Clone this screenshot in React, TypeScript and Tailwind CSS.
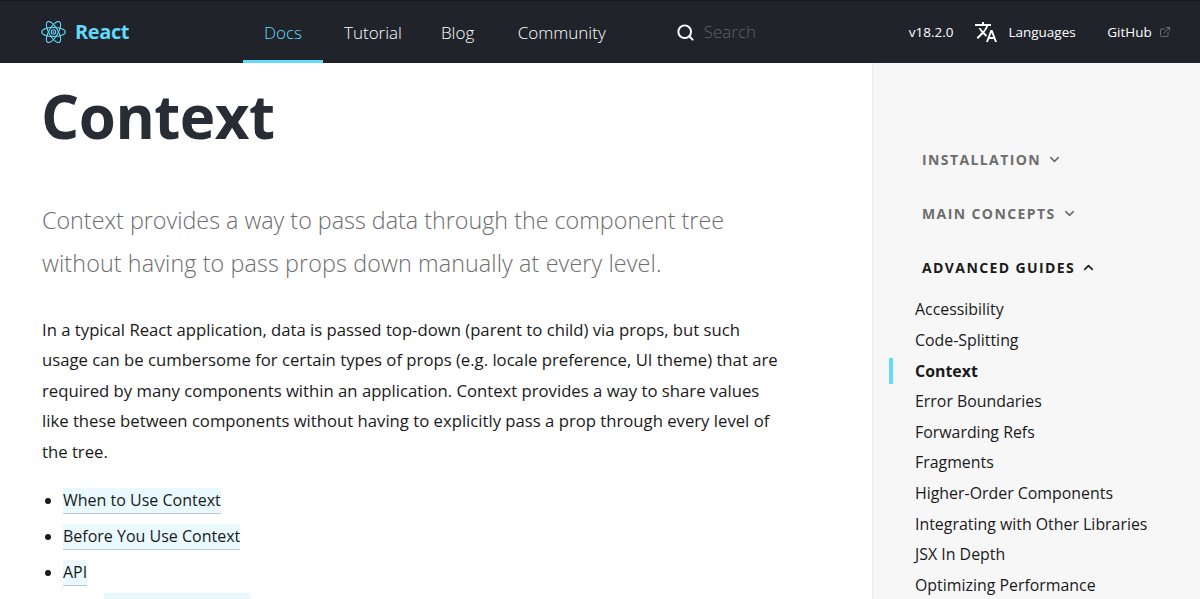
import React from 'react';
import { Search, ExternalLink, ChevronDown, ChevronUp } from 'lucide-react';

const FONT = "font-['Open_Sans','Noto_Sans',sans-serif]";

const NAV = ['Tutorial', 'Blog', 'Community'];

const GUIDES = [
  'Accessibility',
  'Code-Splitting',
  'Context',
  'Error Boundaries',
  'Forwarding Refs',
  'Fragments',
  'Higher-Order Components',
  'Integrating with Other Libraries',
  'JSX In Depth',
  'Optimizing Performance',
];

const ReactLogo = () => (
  <svg viewBox="-11.5 -10.2 23 20.4" className="w-[25px] h-[22px] text-[#61dafb]" fill="none" stroke="currentColor" strokeWidth="1">
    <circle r="2.05" fill="none" />
    <circle r="0.8" fill="currentColor" stroke="none" />
    <ellipse rx="11" ry="4.2" />
    <ellipse rx="11" ry="4.2" transform="rotate(60)" />
    <ellipse rx="11" ry="4.2" transform="rotate(120)" />
  </svg>
);

const TranslateIcon = () => (
  <svg viewBox="0 0 24 24" className="w-6 h-6 text-white" fill="currentColor">
    <path d="M12.87 15.07l-2.54-2.51.03-.03A17.52 17.52 0 0 0 14.07 6H17V4h-7V2H8v2H1v2h11.17C11.5 7.92 10.44 9.75 9 11.35 8.07 10.32 7.3 9.19 6.69 8h-2c.73 1.63 1.73 3.17 2.98 4.56l-5.09 5.02L4 19l5-5 3.11 3.11.76-2.04zM18.5 10h-2L12 22h2l1.12-3h4.75L21 22h2l-4.5-12zm-2.62 7l1.62-4.33L19.12 17h-3.24z" />
  </svg>
);

function TocLink({ children }: { children: React.ReactNode }) {
  return <a className="bg-[#e9f9fe] border-b border-[#b9cdd6] pt-[1px] pb-[2px] text-[#1a1a1a]">{children}</a>;
}

function SideHeading({ label, open }: { label: string; open?: boolean }) {
  return (
    <div className={`flex items-center gap-[6px] h-[20px] text-[14px] font-bold tracking-[1.4px] ${open ? 'text-[#1a1a1a]' : 'text-[#6d6d6d]'}`}>
      <span className="whitespace-nowrap">{label}</span>
      {open ? <ChevronUp size={15} strokeWidth={2.5} /> : <ChevronDown size={15} strokeWidth={2.5} />}
    </div>
  );
}

export default function App() {
  return (
    <div className={`h-[599px] w-[1200px] overflow-hidden flex flex-col bg-white ${FONT}`}>
      <header className="h-[63px] shrink-0 bg-[#20232a] border-t border-[#16181d] flex items-center text-white relative">
        <div className="flex items-center gap-[9px] ml-[41px] w-[202px]">
          <ReactLogo />
          <span className="text-[20px] font-bold text-[#61dafb] tracking-[-0.4px]">React</span>
        </div>
        <nav className="flex h-full text-[17px] font-light">
          <a className="relative w-[80px] flex items-center justify-center pt-[2px] text-[#61dafb]">
            Docs
            <span className="absolute left-0 right-0 bottom-0 h-[3px] bg-[#61dafb]" />
          </a>
          <a className="ml-[21px] flex items-center pt-[2px]">{NAV[0]}</a>
          <a className="ml-[39px] flex items-center pt-[2px]">{NAV[1]}</a>
          <a className="ml-[43.5px] flex items-center pt-[2px]">{NAV[2]}</a>
        </nav>
        <div className="flex items-center ml-[70px] w-[233px]">
          <Search size={19} strokeWidth={2.5} />
          <span className="ml-[9px] text-[17px] font-light text-[#5f6268]">Search</span>
        </div>
        <span className="text-[13.5px]">v18.2.0</span>
        <span className="ml-[21px]"><TranslateIcon /></span>
        <span className="ml-[10px] text-[13.5px]">Languages</span>
        <span className="ml-[31.5px] text-[13.5px]">GitHub</span>
        <ExternalLink size={12} className="ml-[7px] text-[#6d6d6d]" />
      </header>

      <div className="flex flex-1 min-h-0">
        <main className="w-[810px] shrink-0 pl-[41px] overflow-hidden">
          <h1 className="text-[60px] leading-[70px] font-bold text-[#282c34] mt-[18px] tracking-[-0.5px]">Context</h1>
          <p className="mt-[48px] ml-[1px] text-[23.3px] leading-[43px] font-light text-[#6d6d6d] whitespace-nowrap">
            Context provides a way to pass data through the component tree
            <br />
            <span className="tracking-[0.12px]">without having to pass props down manually at every level.</span>
          </p>
          <p className="mt-[30px] ml-[1px] text-[16.7px] leading-[30.4px] text-[#1a1a1a] whitespace-nowrap">
            In a typical React application, data is passed top-down (parent to child) via props, but such
            <br />
            usage can be cumbersome for certain types of props (e.g. locale preference, UI theme) that are
            <br />
            required by many components within an application. Context provides a way to share values
            <br />
            like these between components without having to explicitly pass a prop through every level of
            <br />
            the tree.
          </p>
          <ul className="mt-[18px] ml-[1px] text-[16px] leading-[30px] list-disc pl-[21px] text-[#1a1a1a] flex flex-col gap-[6.2px]">
            <li><TocLink>When to Use Context</TocLink></li>
            <li><TocLink>Before You Use Context</TocLink></li>
            <li>
              <TocLink>API</TocLink>
              <div className="ml-[41px] mt-[6px] w-[147px] h-[30px] bg-[#e9f9fe]" />
            </li>
          </ul>
        </main>

        <aside className="flex-1 bg-[#f7f7f7] border-l border-[#ececec] ml-[62px] pt-[86px]">
          <div className="pl-[49px] flex flex-col gap-[34px]">
            <SideHeading label="INSTALLATION" />
            <SideHeading label="MAIN CONCEPTS" />
            <SideHeading label="ADVANCED GUIDES" open />
          </div>
          <ul className="mt-[18px] flex flex-col text-[15.9px] text-[#1a1a1a]">
            {GUIDES.map(g => (
              <li key={g} className={`h-[30.6px] flex items-center pl-[42px] whitespace-nowrap relative ${g === 'Context' ? 'font-bold' : ''}`}>
                {g === 'Context' && <span className="absolute left-[16px] top-[2px] w-[4px] h-[26px] bg-[#61dafb]" />}
                {g}
              </li>
            ))}
          </ul>
        </aside>
      </div>
    </div>
  );
}
